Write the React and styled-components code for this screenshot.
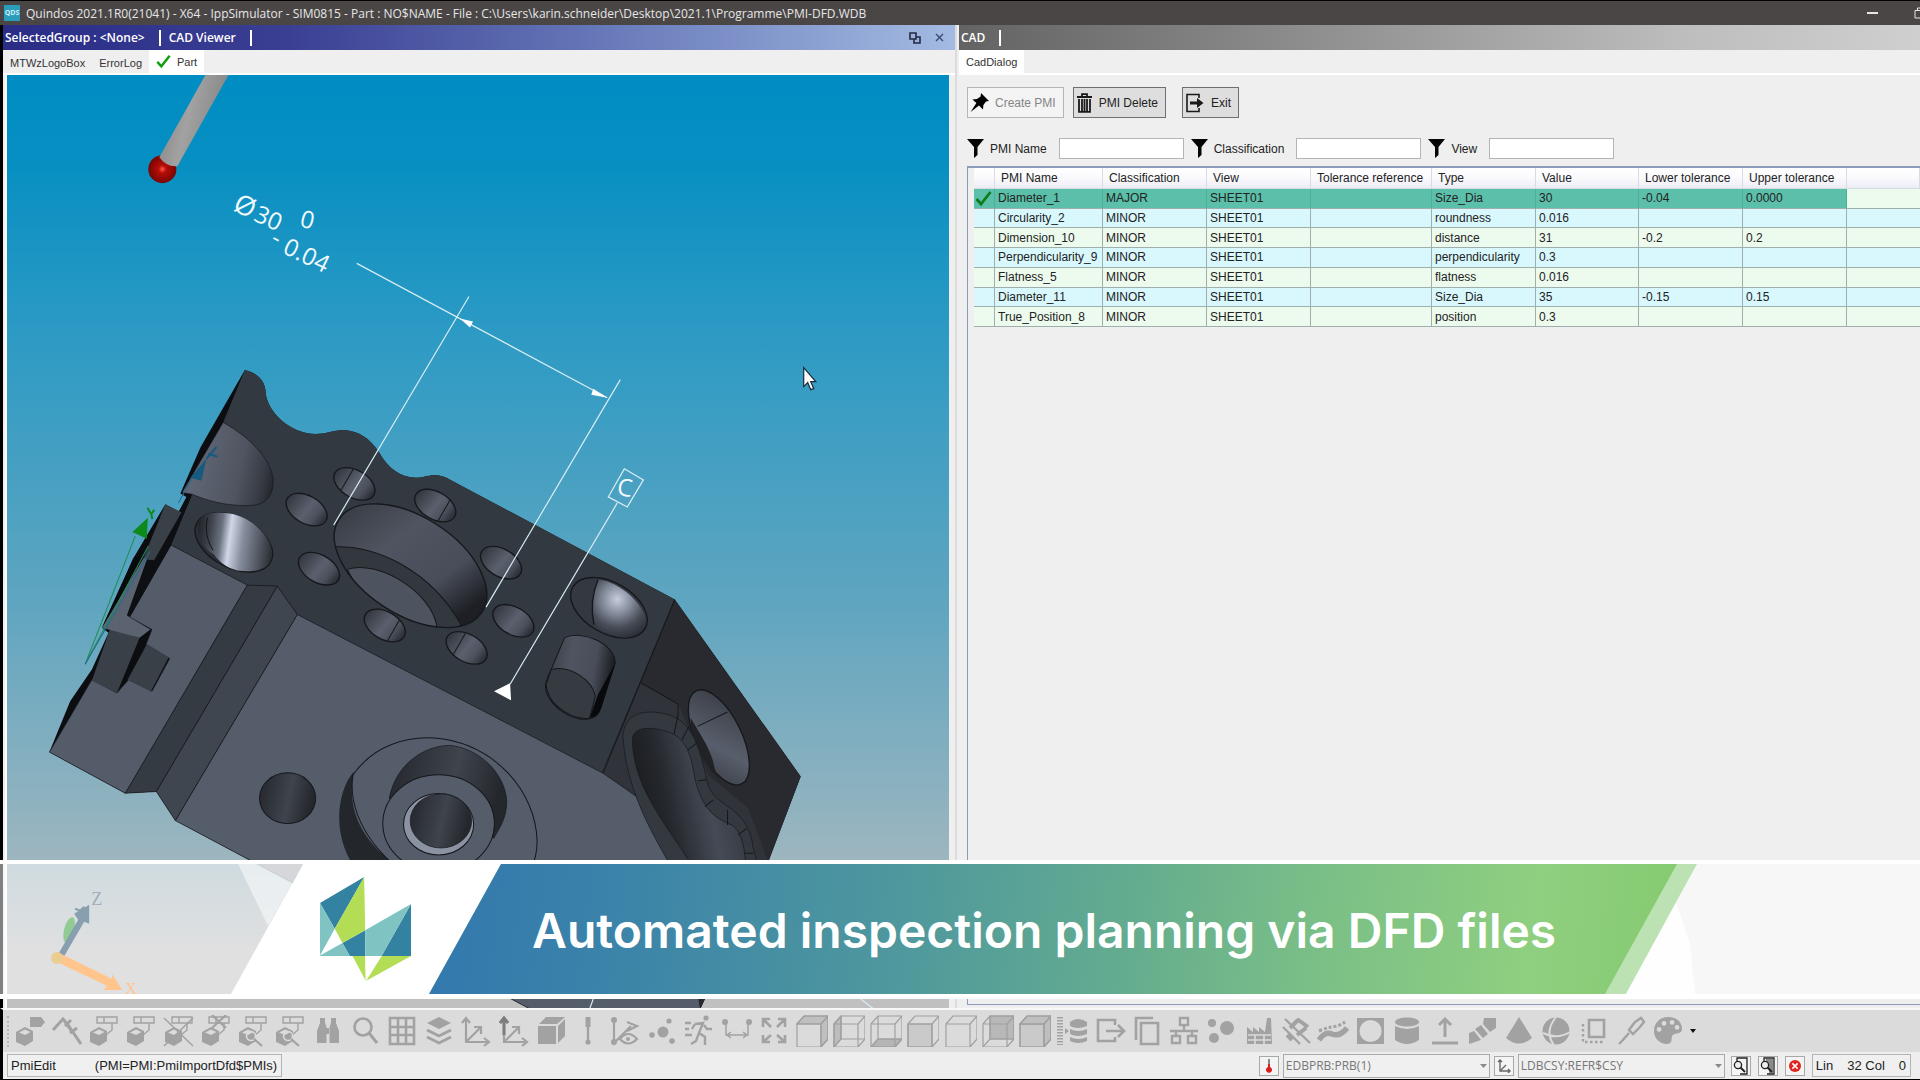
import React from "react";
import styled, { createGlobalStyle } from "styled-components";

const UI = `"Open Sans", "Noto Sans", sans-serif`;
const SANS = `"Liberation Sans", Arial, sans-serif`;

const GlobalStyle = createGlobalStyle`
  *, *::before, *::after { box-sizing: border-box; }
  body { margin: 0; background: #000; font-family: ${SANS}; font-size: 12px; color: #222; }
  button, input, select { font: inherit; color: inherit; }
`;

/* ---------- window frame ---------- */

const Shell = styled.div`
  min-height: 100vh;
  display: flex;
  flex-direction: column;
  border-top: 1px solid #000;
  border-bottom: 1px solid #000;
  overflow: hidden;
`;

const TitleBar = styled.header`
  height: 24px;
  display: flex;
  align-items: center;
  gap: 6px;
  padding-left: 4px;
  background: #4a4646;
  color: #e6e6e6;
  font-family: ${UI};
  white-space: nowrap;
  overflow: hidden;
`;

const AppBadge = styled.span`
  width: 16px;
  height: 16px;
  background: #2b9dbb;
  color: #cdeef7;
  font-size: 7px;
  font-weight: 700;
  line-height: 16px;
  text-align: center;
`;

const TitleText = styled.h1`
  margin: 0;
  flex: 1;
  font-size: 12px;
  font-weight: 400;
`;

const WindowButtons = styled.div`
  display: flex;
  margin-right: -24px;
`;

const WindowButton = styled.button`
  width: 48px;
  height: 24px;
  padding: 0;
  border: 0;
  background: none;
  color: #e6e6e6;
  display: grid;
  place-items: center;
`;

const Workspace = styled.main`
  flex: 1;
  display: flex;
`;

const Pane = styled.section`
  display: flex;
  flex-direction: column;
  min-width: 0;
  background: #efefef;
  ${(p) =>
    p.$side === "left"
      ? "width: calc(50% - 3px); border-left: 3px solid #000; border-right: 2px solid #dcdcdc;"
      : "flex: 1; padding-left: 2px;"}
`;

const PaneHeader = styled.div`
  height: 25px;
  display: flex;
  align-items: center;
  padding: 0 10px 0 2px;
  color: #fff;
  font-family: ${UI};
  background: ${(p) =>
    p.$active
      ? "linear-gradient(90deg, #2a2c86 0%, #3a3f93 30%, #6273b5 60%, #a3bbe2 100%)"
      : "linear-gradient(90deg, #636363 0%, #8c8c8c 35%, #bdbdbd 75%, #cfcfcf 100%)"};
`;

const HeaderTitle = styled.h2`
  margin: 0;
  padding-right: 14px;
  margin-right: 8px;
  border-right: 2px solid #fff;
  font-size: 12px;
  font-weight: 600;
  line-height: 16px;
  white-space: nowrap;
`;

const HeaderActions = styled.div`
  margin-left: auto;
  display: flex;
  gap: 12px;
`;

const MiniButton = styled.button`
  width: 12px;
  height: 14px;
  padding: 0;
  border: 0;
  background: none;
  display: grid;
  place-items: center;
`;

const Tabs = styled.nav`
  height: 25px;
  display: flex;
  align-items: flex-start;
  border-bottom: 2px solid #fff;
  font-size: 11px;
`;

const Tab = styled.button`
  height: ${(p) => (p.$active ? 23 : 21)}px;
  margin-top: ${(p) => (p.$active ? 0 : 2)}px;
  padding: 0 7px;
  display: flex;
  align-items: center;
  gap: 6px;
  border: 0;
  background: ${(p) => (p.$active ? "#fff" : "transparent")};
  color: #333;
  white-space: nowrap;
`;

/* ---------- CAD viewport ---------- */

const Viewport = styled.div`
  flex: 1;
  margin: 0 6px 0 2px;
  border-left: 2px solid #fff;
  display: flex;
  background: linear-gradient(180deg, #008dc3 0%, #068fc2 9%, #2f9bc4 29%, #5ea5c0 56%, #9ab5bf 83%, #c0c0c1 94%, #c0c0c1 100%);
`;

const Scene = styled.svg`
  flex: 1;
  width: 100%;
  min-width: 0;
  min-height: 600px;
  display: block;
`;

/* ---------- PMI dialog ---------- */

const Dialog = styled.div`
  flex: 1;
  display: flex;
  flex-direction: column;
  padding: 12px 0 3px 8px;
`;

const ActionRow = styled.div`
  display: flex;
  gap: 9px;
`;

const ActionButton = styled.button`
  height: 31px;
  display: flex;
  align-items: center;
  gap: 6px;
  padding: 0 7px 0 2px;
  margin-right: ${(p) => p.$after || 0}px;
  border: 1px solid #6f6f6f;
  background: #dedede;
  color: #222;
  white-space: nowrap;
  &:disabled {
    border-color: #b5b5b5;
    background: #f4f4f4;
    color: #858585;
  }
`;

const FilterRow = styled.div`
  display: flex;
  align-items: center;
  gap: 7px;
  margin: 20px 0 7px;
`;

const FilterField = styled.div`
  display: flex;
  align-items: center;
  gap: 6px;
`;

const FilterInput = styled.input`
  width: 125px;
  height: 21px;
  margin-left: 6px;
  border: 1px solid #b4b4b4;
  background: #fff;
`;

const GridFrame = styled.div`
  flex: 1;
  padding-left: 6px;
  border: 1px solid #8b9cb8;
  border-top: 2px solid #8b9cb8;
  border-right: 0;
  overflow: hidden;
`;

const PmiTable = styled.table`
  width: 100%;
  height: 159px;
  table-layout: fixed;
  border-collapse: separate;
  border-spacing: 0;
  font-size: 12px;
`;

const Col = styled.col`
  width: ${(p) => (p.$w ? `${p.$w}px` : "auto")};
`;

const Th = styled.th`
  height: 21px;
  padding: 0 0 0 6px;
  text-align: left;
  font-weight: 400;
  white-space: nowrap;
  border-right: 1px solid #d9dbe4;
  border-bottom: 1px solid #d5dbe0;
  background: linear-gradient(180deg, #fff 0%, #fafafd 50%, #ececf4 100%);
`;

const Td = styled.td`
  padding: 0 0 0 3px;
  line-height: 18px;
  white-space: nowrap;
  overflow: hidden;
  border-right: 1px solid #9fb0ac;
  border-bottom: 1px solid #9fb0ac;
`;

const Tr = styled.tr`
  background: ${(p) => (p.$tint ? "#d9f8fd" : "#edfbee")};
  ${(p) => p.$selected && `& > td:not(:last-child) { background: #5bbfa9; border-right-color: #4fae9a; }`}
  & > td:first-child { padding-left: 1px; }
  & > td:last-child { border-right: 0; }
  svg { display: block; }
`;

/* ---------- toolbar & status ---------- */

const ToolStrip = styled.div`
  height: 44px;
  display: flex;
  align-items: center;
  padding-left: 4px;
  border-left: 3px solid #000;
  border-top: 2px solid #f8f8f8;
  background: #dbdbdb;
`;

const Grip = styled.span`
  width: 4px;
  height: 31px;
  border-left: 2px dotted #b4b4b4;
`;

const ToolGrid = styled.div`
  width: 87.6%;
  flex: 0 0 auto;
  display: grid;
  grid-template-columns: repeat(45, 1fr);
`;

const ToolButton = styled.button`
  height: 36px;
  padding: 0;
  border: 0;
  background: none;
  color: #a2a2a2;
  display: grid;
  place-items: center;
`;

const MoreButton = styled(ToolButton)`
  width: 12px;
  color: #111;
`;

const StatusBar = styled.footer`
  height: 27px;
  display: flex;
  align-items: center;
  padding: 0 0 0 4px;
  border-left: 3px solid #000;
  background: #eee;
  overflow: hidden;
`;

const StatusBox = styled.div`
  height: 23px;
  display: flex;
  align-items: center;
  gap: ${(p) => p.$gap || 39}px;
  padding: 0 4px 0 3px;
  border: 1px solid #b4b4b4;
  background: #f0f0f0;
  font-size: 13px;
  white-space: nowrap;
  color: #222;
`;

const StatusRight = styled.div`
  margin-left: auto;
  display: flex;
  align-items: center;
  gap: 4px;
  padding-right: 9px;
`;

const StatusButton = styled.button`
  width: 20px;
  height: 20px;
  padding: 0;
  margin-right: ${(p) => p.$after || 0}px;
  border: 1px solid #a8a8a8;
  background: #f4f4f4;
  display: grid;
  place-items: center;
`;

const SelectWrap = styled.div`
  position: relative;
  display: flex;
  margin-right: ${(p) => p.$after || 0}px;
  svg { position: absolute; right: 3px; top: 10px; pointer-events: none; }
`;

const StatusSelect = styled.select`
  appearance: none;
  width: 207px;
  height: 24px;
  padding: 0 16px 0 2px;
  border: 1px solid #aaa;
  border-radius: 0;
  background: #f0f0f0;
  color: #777;
  font-family: ${UI};
  font-size: 12px;
`;

/* ---------- lower third ---------- */

const Banner = styled.aside`
  position: fixed;
  left: 0;
  right: 0;
  bottom: 81px;
  display: flex;
  height: 139px;
  border-top: 4px solid #fff;
  border-bottom: 5px solid #fff;
  background: rgba(255, 255, 255, 0.5);
`;

const Glass = styled.div`
  width: 303px;
  margin-right: -72px;
  background: rgba(255, 255, 255, 0.5);
  clip-path: polygon(238px 0, 303px 0, 268px 62px);
`;

const LogoPlate = styled.div`
  width: 270px;
  display: flex;
  align-items: center;
  padding-left: 89px;
  background: #fff;
  clip-path: polygon(72px 0, 100% 0, 100% 100%, 0 100%);
`;

const Ribbon = styled.div`
  flex: 1;
  margin-left: -72px;
  padding-right: 20px;
  display: flex;
  background: #bce2b3;
  clip-path: polygon(72px 0, 100% 0, calc(100% - 71px) 100%, 0 100%);
`;

const RibbonFill = styled.div`
  flex: 1;
  display: flex;
  align-items: center;
  padding: 4px 0 0 103px;
  background: linear-gradient(97deg, #3278ae 0%, #3b83a9 15%, #4f989d 38%, #64ac8f 56%, #79be87 70%, #8fcf80 88%, #85ca6f 100%);
  clip-path: polygon(0 0, 100% 0, calc(100% - 72px) 100%, 0 100%);
`;

const BannerTitle = styled.p`
  margin: 0;
  color: #fff;
  font-family: Inter, "Open Sans", sans-serif;
  font-size: 48px;
  font-weight: 600;
  line-height: 56px;
  white-space: nowrap;
`;

const RightGlow = styled.div`
  width: 294px;
  margin-left: -71px;
  background: rgba(255, 255, 255, 0.8);
  clip-path: polygon(71px 0, 0 100%, 69px 100%, 64px 80px, 50px 38px);
`;

/* ---------- small drawings ---------- */

const Tick = ({ size = 17, color = "#12a012" }) => (
  <svg width={size} height={size} viewBox="0 0 17 17" fill="none" stroke={color} strokeWidth="2.8">
    <path d="M1.5 9 L6 14 L15.5 2" />
  </svg>
);

const Pin = () => (
  <svg width="19" height="19" viewBox="0 0 19 19">
    <path d="M11 0 L19 8 L16 8.6 L13.4 12 L13 16.4 L9 12.6 L0.6 19 L6.4 10 L2.4 6.4 L7 6 L10.6 3.6Z" fill="#000" />
  </svg>
);

const Trash = () => (
  <svg width="17" height="20" viewBox="0 0 17 20" fill="none" stroke="#1a1a1a" strokeWidth="1.8">
    <path d="M1 4H16M6 3.5V1.2H11V3.5M3 6V18.8H14V6M6 6V18M8.5 6V18M11 6V18" />
  </svg>
);

const ExitIcon = () => (
  <svg width="20" height="20" viewBox="0 0 20 20" fill="none" stroke="#1a1a1a">
    <path d="M14 5V1.5H2V18.5H14V15" strokeWidth="1.6" />
    <path d="M5 10H16" strokeWidth="3" />
    <path d="M12 5L18.5 10L12 15Z" fill="#1a1a1a" stroke="none" />
  </svg>
);

const Funnel = () => (
  <svg width="17" height="19" viewBox="0 0 17 19">
    <path d="M0 0H17L10.5 8V16L7 19V8Z" fill="#050505" />
  </svg>
);

const Logo = () => (
  <svg width="91" height="104" viewBox="960 66 272 311" role="img" aria-label="Company logo">
    <path d="M1092 66L960 144L1004 221Z M1027 263L1095 225V302H1049Z M1232 147V302H1144Z" fill="#3382a2" />
    <path d="M960 144L1004 221L960 301Z M960 301L1027 263L1049 302H960Z M1095 225L1232 147L1144 302H1095Z" fill="#80c3c3" />
    <path d="M1092 66L1095 225L1027 263L1004 221Z M1057 302H1095L1097 377Z M1144 302H1232L1097 377Z" fill="#b2dd55" />
    <path d="M1095 302H1144L1097 377Z" fill="#fff" />
  </svg>
);

/* ---------- toolbar glyphs, 32 x 32 ---------- */

const box = (
  <path d="M2 17L11 12L19 16V26L11 31L2 27Z M5 17.5L11 20L16.5 17L11 14.4Z" fill="currentColor" fillRule="evenodd" stroke="none" />
);
const flag = <path d="M9 2H29V8H9Z M16 2V8 M24 8V15L18 20" strokeWidth="1.4" />;
const axes = <path d="M6 4V27H27 M2 8L6 3L10 8 M24 23L29 27L24 31 M7 26L20 13 M14 12H21V19" />;
const loupe = (
  <>
    <circle cx="14" cy="21" r="4.5" stroke="#dbdbdb" strokeWidth="1.6" />
    <path d="M17 24L25 31" />
  </>
);

const cube = (shade) => (
  <g strokeWidth="1.2" stroke="#a0a0a0">
    {shade.includes("f") && <path d="M1 9H25V32H1Z" fill="#cacaca" />}
    {shade.includes("t") && <path d="M1 9L8 1H32L25 9Z" fill="#bfbfbf" />}
    {shade.includes("r") && <path d="M25 9L32 1V24L25 32Z" fill="#bfbfbf" />}
    {shade.includes("l") && <path d="M1 9L8 1V24L1 32Z" fill="#bdbdbd" />}
    {shade.includes("b") && <path d="M1 32L8 24H32L25 32Z" fill="#b5b5b5" />}
    {shade.includes("k") && <path d="M8 1H32V24H8Z" fill="#b8b8b8" />}
    <path d="M1 9H25V32H1Z M1 9L8 1H32V24L25 32 M25 9L32 1" />
    {shade.includes("w") && <path d="M8 1V24H32 M1 32L8 24" />}
  </g>
);

const TOOLS = [
  ["Create element", <>{box}<path d="M16 2H27L31 7L27 12H16Z" fill="currentColor" stroke="none" /></>],
  ["Measure", <path d="M2 15L12 4L17 10L30 29 M12 4L22 18 M20 5L14 11 M26 13L19 18" strokeWidth="3" />],
  ["Show PMI", <>{box}{flag}</>],
  ["Add PMI", <>{box}{flag}</>],
  ["Hide PMI", <>{box}{flag}<path d="M1 3L30 31 M30 3L1 31" strokeWidth="1.5" /></>],
  ["Delete PMI", <>{box}{flag}<path d="M12 0L26 13 M26 0L12 13" /></>],
  ["Find PMI", <>{box}{flag}{loupe}</>],
  ["Inspect PMI", <>{box}{flag}{loupe}</>],
  ["Search", <path d="M8 3H13V8L14.5 12V28H5V16L8 8Z M24 3H19V8L17.5 12V28H27V16L24 8Z M14 13H18V19H14Z" fill="currentColor" stroke="none" />],
  ["Zoom", <><circle cx="14" cy="12" r="8.5" strokeWidth="2.6" /><path d="M20 18L28 28" strokeWidth="3" /></>],
  ["Grid", <path d="M4 3H28V29H4Z M12 3V29 M20 3V29 M4 12H28 M4 20H28" strokeWidth="2.6" />],
  ["Layers", <><path d="M16 2L28 8L16 14L4 8Z" fill="currentColor" stroke="none" /><path d="M4 15L16 21L28 15 M4 22L16 28L28 22" strokeWidth="2.8" /></>],
  ["Coordinate system", axes],
  ["Edit coordinate system", <>{axes}<path d="M6 5V20 M2 8L6 3L10 8" stroke="#7d7d7d" strokeWidth="3" /></>],
  ["Solid", <path d="M3 11H21V29H3Z M4 9L11 2H30L22 9Z M23 11L30 4V21L23 28Z" fill="currentColor" stroke="none" />],
  ["Probe", <><path d="M16 2V29" strokeWidth="2.4" /><path d="M16 2V12" strokeWidth="5" /><circle cx="16" cy="27" r="2.6" fill="currentColor" stroke="none" /></>],
  ["Show path", <><path d="M5 4V28L22 11 M18 7L28 11L18 16" /><circle cx="5" cy="5" r="3" fill="currentColor" stroke="none" /><circle cx="5" cy="27" r="3" fill="currentColor" stroke="none" /><path d="M11 24Q19 14 28 24Q19 33 11 24Z" /><circle cx="19" cy="24" r="2" fill="currentColor" stroke="none" /></>],
  ["Points", <g fill="currentColor" stroke="none"><circle cx="16" cy="17" r="5.5" /><circle cx="22" cy="6" r="2.6" /><circle cx="5" cy="20" r="2.8" /><circle cx="25" cy="26" r="2.8" /></g>],
  ["Run", <><circle cx="22" cy="3" r="2.6" fill="currentColor" stroke="none" /><path d="M11 9L19 8L15 18L21 22V30 M15 18L12 26L7 29 M20 10L23 14H28 M11 9L8 14 M1 8H7 M1 14H5 M1 20H8" strokeWidth="2.4" /></>],
  ["Distance", <><path d="M5 7V20H27V7 M10 17L6 20L10 23 M22 17L26 20L22 23" strokeWidth="1.5" /><circle cx="4" cy="7" r="3" fill="currentColor" stroke="none" /><circle cx="28" cy="7" r="3" fill="currentColor" stroke="none" /></>],
  ["Fit view", <path d="M5 12V4H12 M5 4L13 12 M20 4H27V12 M27 4L19 12 M5 20V27H12 M5 27L13 20 M27 20V27H20 M27 27L19 20" strokeWidth="2.6" />],
  ["Front top view", cube("tr")],
  ["Left view", cube("lw")],
  ["Bottom view", cube("bw")],
  ["Front view", cube("f")],
  ["Right view", cube("")],
  ["Back view", cube("kw")],
  ["Isometric view", cube("ftr")],
  ["Store", <><path d="M4 2V30" strokeWidth="6" strokeDasharray="1.5 1.5" /><g fill="currentColor" stroke="none"><path d="M14 7Q22 1 31 7V11Q22 15 14 11Z M14 14Q22 18 31 14V19Q22 23 14 19Z M14 22Q22 26 31 22V26Q22 30 14 26Z M9 13L13 16L9 19Z" /></g></>],
  ["Export", <path d="M21 10V5H4V26H21V22 M12 16H29 M24 10L30 16L24 22" strokeWidth="2.6" />],
  ["Copy", <path d="M10 8H27V29H10Z M5 25V3H22" strokeWidth="2.6" />],
  ["Structure", <path d="M12 3H20V10H12Z M4 21H12V28H4Z M20 21H28V28H20Z M16 10V16 M2 16H30 M8 16V21 M24 16V21" strokeWidth="2.4" />],
  ["Cluster", <g fill="currentColor" stroke="none"><circle cx="22" cy="13" r="7" /><circle cx="7" cy="8" r="4" /><circle cx="9" cy="23" r="5" /></g>],
  ["Factory", <><path d="M4 29V12L10 17V12L16 17V12L22 17L24 3H28L29 29Z" fill="currentColor" stroke="none" /><path d="M5 20H28 M5 25H28 M12 20V29 M21 20V29" stroke="#dbdbdb" strokeWidth="1.6" /></>],
  ["Caliper", <><path d="M5 4L30 28 M3 12L20 29" strokeWidth="2.4" /><path d="M17 4L28 12 M10 13L18 5 M17 20L26 13 M7 20L12 25" strokeWidth="4" /></>],
  ["Surface points", <><path d="M2 25Q8 16 15 19Q23 22 30 13" strokeWidth="5.5" /><path d="M2 16Q9 13 15 12Q23 11 28 7" strokeDasharray="3 2" strokeWidth="3" /></>],
  ["Hole", <path d="M3 3H30V29H3Z M16.5 5A11 11 0 1 0 16.6 5Z" fill="currentColor" fillRule="evenodd" stroke="none" />],
  ["Cylinder", <g fill="currentColor" stroke="none"><ellipse cx="16" cy="7" rx="12" ry="4.5" /><path d="M4 11Q16 17 28 11V25Q16 33 4 25Z" /></g>],
  ["Align up", <path d="M16 4V22 M10 10L16 4L22 10 M3 28H29" strokeWidth="3" />],
  ["Link", <path d="M18 3H30V13L24 17L17 9Z M15 10L22 19L17 23L9 14Z M8 16L15 25L3 29V18Z" fill="currentColor" stroke="none" />],
  ["Cone", <path d="M16 2L29 23Q16 34 3 23Z" fill="currentColor" stroke="none" />],
  ["Sphere", <><circle cx="16" cy="16" r="13.5" fill="currentColor" stroke="none" /><path d="M16 2Q4 17 14 30 M3 18Q17 25 30 17" stroke="#dbdbdb" strokeWidth="2" /></>],
  ["Region", <><path d="M11 5H26V22H11Z" strokeWidth="2.6" /><path d="M5 9V27H26" strokeDasharray="2.5 2.5" strokeWidth="2.4" /></>],
  ["Screwdriver", <path d="M20 7L26 3L29 7L24 13L18 19L14 15Z M14 18L7 26 M4 29L9 24" strokeWidth="2.4" />],
  ["Colours", <path d="M16 2C25 2 30 7 30 14C30 20 23 17 20 21C19 25 21 29 14 29C6 28 2 22 2 16C2 8 8 2 16 2Z M7 12A2.4 2.4 0 1 0 7.1 12Z M12 6A2.4 2.4 0 1 0 12.1 6Z M20 5A2.4 2.4 0 1 0 20.1 5Z M25 10A2.4 2.4 0 1 0 25.1 10Z" fill="currentColor" fillRule="evenodd" stroke="none" />],
];

const Glyph = ({ children }) => (
  <svg width="32" height="32" viewBox="0 0 32 32" fill="none" stroke="currentColor" strokeWidth="2.2">
    {children}
  </svg>
);

/* ---------- machined part ---------- */

const HOLES = [
  [1061, 429, 1], [1303, 494, 2], [918, 506, 0], [955, 683, 0],
  [1152, 853, 2], [1397, 920, 1], [1500, 665, 0], [1537, 839, 0],
];

function CadScene() {
  return (
    <Scene viewBox="7 75 942 931" preserveAspectRatio="xMinYMin slice" role="img" aria-label="Part with dimensions">
      <defs>
        <linearGradient id="hole" x1="0" y1="0" x2="1" y2="0.1">
          <stop offset="0" stopColor="#2f333a" />
          <stop offset="0.55" stopColor="#5a606d" />
          <stop offset="0.8" stopColor="#4b505c" />
          <stop offset="1" stopColor="#2d3138" />
        </linearGradient>
        <linearGradient id="bore" x1="0" y1="0" x2="1" y2="0.2">
          <stop offset="0" stopColor="#343940" />
          <stop offset="0.4" stopColor="#4f5460" />
          <stop offset="0.75" stopColor="#484d59" />
          <stop offset="1" stopColor="#1d1f24" />
        </linearGradient>
        <linearGradient id="cone" gradientUnits="userSpaceOnUse" x1="590" y1="600" x2="815" y2="630">
          <stop offset="0" stopColor="#24272c" />
          <stop offset="0.15" stopColor="#3d424b" />
          <stop offset="0.3" stopColor="#6b7280" />
          <stop offset="0.42" stopColor="#cfd7e8" />
          <stop offset="0.6" stopColor="#858d9d" />
          <stop offset="1" stopColor="#2a2d33" />
        </linearGradient>
        <radialGradient id="ball" gradientUnits="userSpaceOnUse" cx="1848" cy="775" r="120">
          <stop offset="0" stopColor="#c6cedd" />
          <stop offset="0.3" stopColor="#8f97a7" />
          <stop offset="0.7" stopColor="#474c57" />
          <stop offset="1" stopColor="#2b2e35" />
        </radialGradient>
        <linearGradient id="bowl" gradientUnits="userSpaceOnUse" x1="590" y1="380" x2="818" y2="430">
          <stop offset="0" stopColor="#5f6573" />
          <stop offset="0.55" stopColor="#4f5460" />
          <stop offset="0.85" stopColor="#373b44" />
          <stop offset="1" stopColor="#24272c" />
        </linearGradient>
        <linearGradient id="kidney" x1="0" y1="0.6" x2="1" y2="0.3">
          <stop offset="0" stopColor="#17181b" />
          <stop offset="0.3" stopColor="#24272c" />
          <stop offset="0.65" stopColor="#454b56" />
          <stop offset="1" stopColor="#2f333a" />
        </linearGradient>
        <linearGradient id="slot" gradientUnits="userSpaceOnUse" x1="2070" y1="1080" x2="2230" y2="1300">
          <stop offset="0" stopColor="#383c44" />
          <stop offset="0.6" stopColor="#585e6b" />
          <stop offset="1" stopColor="#3a3e47" />
        </linearGradient>
        <linearGradient id="well" x1="0" y1="0" x2="1" y2="0.2">
          <stop offset="0" stopColor="#22252a" />
          <stop offset="0.6" stopColor="#3f444d" />
          <stop offset="1" stopColor="#24272c" />
        </linearGradient>
        <linearGradient id="rod" x1="0" y1="0" x2="1" y2="0.3">
          <stop offset="0" stopColor="#7e7e7e" />
          <stop offset="0.5" stopColor="#a2a2a2" />
          <stop offset="1" stopColor="#858585" />
        </linearGradient>
        <radialGradient id="tip" cx="0.5" cy="0.5" r="0.55">
          <stop offset="0" stopColor="#ff5a4a" />
          <stop offset="0.25" stopColor="#b80d08" />
          <stop offset="1" stopColor="#6d0502" />
        </radialGradient>
        <clipPath id="boreClip">
          <ellipse cx="1229" cy="674" rx="255" ry="146" transform="rotate(33 1229 674)" />
        </clipPath>
      </defs>

      <circle cx="162" cy="169" r="14" fill="url(#tip)" />
      <path d="M205 75H228L177 166Q166 167 159 157Z" fill="url(#rod)" />

      <g transform="translate(0 340) scale(0.33333)" stroke="#15171b" strokeWidth="0">
        <path
          d="M733 88C775 98 795 125 795 155C800 215 870 280 945 280C985 280 1010 262 1045 270C1090 278 1115 305 1135 335C1165 390 1215 420 1270 408C1300 400 1325 402 1350 418L2020 775L2397 1305L2300 1560L2097 2000H1585L525 1437L468 1350L375 1355L148 1232L210 1080L275 985L325 875L305 860L400 650L495 490L535 512L558 468L540 458L600 320Z"
          fill="#0c0d10"
        />
        <path
          d="M733 88C775 98 795 125 795 155C800 215 870 280 945 280C985 280 1010 262 1045 270C1090 278 1115 305 1135 335C1165 390 1215 420 1270 408C1300 400 1325 402 1350 418L2020 775L1800 1298L890 820L830 735L740 732L512 612L575 460L620 350L668 245Z"
          fill="#333940"
        />
        <path d="M2020 775L2397 1305L2300 1560L2097 2000H1980L2020 1560L1800 1298Z" fill="#282a2f" />
        <path d="M1918 1025L2030 1085L2120 1300L2240 1400L2300 1560L2230 1700H2000L1800 1298Z" fill="#30343a" />
        <path d="M890 820L1805 1295L1920 1375C1985 1430 2010 1500 2020 1560L2097 2000H1585L525 1437Z" fill="#555d6b" strokeWidth="2" />
        <path d="M830 735L890 820L525 1437L468 1350Z" fill="#40464f" strokeWidth="2" />
        <path d="M740 732L830 735L468 1350L375 1355Z" fill="#353b42" strokeWidth="2" />
        <path d="M512 612L740 732L375 1355L148 1232L275 1015L350 1055L385 1015L455 1050L508 952L437 910L455 865L388 828Z" fill="#545c6a" strokeWidth="2" />
        <path d="M330 862L418 890L350 1055L275 1018Z M440 908L505 948L452 1050L382 1015Z" fill="#3a4048" />
        <path d="M495 490L545 515L462 658L430 650Z" fill="#3a4048" />
        <path d="M430 650L462 658L388 828L450 865L418 890L305 860Z" fill="#5b6371" />
        <path d="M440 655L462 658L540 520L575 460L512 612L388 828L380 822Z" fill="#0d0f12" />
        <path d="M430 650L305 860L400 650Z" fill="#090a0c" />
        <path d="M668 245C750 290 818 360 818 425C815 480 780 495 740 494C680 495 620 480 575 460L545 455Z" fill="url(#bowl)" strokeWidth="2" />

        <ellipse cx="700" cy="604" rx="125" ry="76" transform="rotate(28 700 604)" fill="#2b2e35" strokeWidth="4" />
        <path d="M592 560C590 510 650 510 700 520C760 535 815 590 815 640C810 690 760 695 710 688C680 682 655 662 640 640C612 625 595 595 592 560Z" fill="url(#cone)" />
        <path d="M622 530C612 560 620 600 638 628" fill="none" strokeWidth="3" />

        {HOLES.map(([x, y, seam]) => (
          <g key={`${x}-${y}`} transform={`rotate(30 ${x} ${y})`}>
            <ellipse cx={x} cy={y} rx="67" ry="41" fill="url(#hole)" strokeWidth="4" />
            {seam === 1 && <path d={`M${x - 25} ${y - 36}V${y + 36}`} strokeWidth="3" />}
            {seam === 2 && <path d={`M${x + 30} ${y - 36}V${y + 34}`} strokeWidth="3" />}
          </g>
        ))}

        <ellipse cx="1229" cy="674" rx="255" ry="146" transform="rotate(33 1229 674)" fill="url(#bore)" />
        <g clipPath="url(#boreClip)">
          <path d="M990 618C1130 610 1290 690 1380 850L1350 880C1240 870 1210 830 1130 780C1050 725 1000 690 990 618Z" fill="#33383e" strokeWidth="3" />
          <path d="M1040 685C1130 655 1290 750 1308 855C1250 860 1180 835 1130 800C1090 770 1060 730 1040 685Z" fill="#4d535f" strokeWidth="3" />
        </g>
        <ellipse cx="1229" cy="674" rx="255" ry="146" transform="rotate(33 1229 674)" fill="none" strokeWidth="4" />

        <ellipse cx="1823" cy="800" rx="125" ry="76" transform="rotate(30 1823 800)" fill="#343841" />
        <path d="M1790 716C1850 718 1935 790 1936 850C1930 890 1880 892 1840 884C1815 878 1795 866 1778 850C1770 810 1772 760 1790 716Z" fill="url(#ball)" />
        <path d="M1790 716C1772 760 1770 810 1778 850" fill="none" strokeWidth="4" />
        <ellipse cx="1823" cy="800" rx="125" ry="76" transform="rotate(30 1823 800)" fill="none" strokeWidth="4" />

        <path d="M1690 890C1740 865 1840 905 1842 965L1795 1110C1780 1140 1740 1140 1700 1120C1650 1095 1625 1050 1635 1020Z" fill="url(#bore)" strokeWidth="3" />
        <path d="M1842 965L1800 1100C1792 1120 1780 1130 1765 1130L1790 1060Z" fill="#08090b" />
        <path d="M1650 985C1710 970 1775 1020 1782 1065L1765 1130C1730 1140 1640 1100 1635 1030Z" fill="#353b41" strokeWidth="3" />

        <ellipse cx="2152" cy="1188" rx="155" ry="68" transform="rotate(64 2152 1188)" fill="url(#slot)" strokeWidth="4" />
        <path d="M2068 1130C2090 1170 2120 1210 2135 1260C2140 1290 2150 1310 2165 1322C2120 1290 2060 1190 2068 1130Z" fill="#202226" />
        <path d="M2088 1155L2178 1112" strokeWidth="3" />

        <path d="M1865 1190C1865 1115 1930 1100 2000 1120C2090 1145 2100 1260 2120 1330C2140 1400 2240 1390 2255 1520L2300 1700H2080C2010 1560 1880 1400 1865 1190Z" fill="#343940" strokeWidth="2" />
        <path d="M1893 1200C1890 1150 1960 1155 2010 1175C2060 1200 2070 1250 2080 1310C2100 1400 2140 1430 2190 1450C2230 1470 2235 1560 2235 1640H2110C2030 1480 1900 1370 1893 1200Z" fill="url(#kidney)" strokeWidth="2" />
        <path d="M2018 1178L2030 1120 M2042 1195L2062 1155 M2060 1225L2085 1205 M2090 1318L2115 1315 M2110 1395L2135 1375 M2178 1450V1405 M2210 1480L2235 1460 M2228 1535H2255 M1920 1025L2030 1088V1120 M2020 775L1805 1295" fill="none" strokeWidth="3" />

        <ellipse cx="861" cy="1370" rx="84" ry="76" fill="url(#well)" strokeWidth="3" />
        <path d="M1060 1290C1005 1350 990 1500 1080 1600L1200 1700L1330 1640C1100 1560 1030 1420 1060 1290Z" fill="#23262b" />
        <path d="M1057 1300C1120 1210 1220 1185 1300 1190C1480 1205 1605 1350 1608 1500C1605 1620 1520 1680 1400 1680C1200 1640 1030 1460 1057 1300Z" fill="#555d6b" strokeWidth="3" />
        <path d="M1165 1370C1190 1250 1290 1210 1350 1212C1450 1225 1515 1310 1517 1380C1517 1430 1495 1460 1478 1490Z" fill="url(#well)" strokeWidth="2" />
        <ellipse cx="1313" cy="1446" rx="167" ry="146" fill="#555d6b" strokeWidth="3" />
        <ellipse cx="1313" cy="1448" rx="105" ry="92" fill="#8b92a2" strokeWidth="3" />
        <ellipse cx="1320" cy="1438" rx="92" ry="81" fill="url(#well)" strokeWidth="2" />
      </g>

      <path d="M85 663L135 535M85 663L148 545" stroke="#1f8f56" fill="none" />
      <path d="M85 663L150 550M178 502L193 475" stroke="#246a94" fill="none" />
      <path d="M133 531L147 518L146 537Z" fill="#0d8a1c" stroke="#0d8a1c" />
      <path d="M147 507L151 513L154 509M151 513L152 518" stroke="#0d8a1c" strokeWidth="2" fill="none" />
      <path d="M190 477L206 458L201 480Z" fill="#155a80" />
      <path d="M206 458L216 446M208 453L217 456" stroke="#155a80" strokeWidth="2" />

      <g stroke="#d8ecf4" strokeWidth="1.2" fill="none">
        <path d="M356 263L606 397M468 296L333 524M619 379L485 606M616 502L509 683M623 468L642 479L626 506L607 496Z" />
        <path d="M592 997L588 1008M859 997L873 1008" />
      </g>
      <path d="M459 318L472 321L469 327Z M606 397L592 388L590 394Z M493 690L509 682L510 699Z" fill="#fff" />
      <g fill="#f2fafd" fontFamily='"Open Sans", sans-serif' fontWeight="400">
        <text transform="translate(231 209) rotate(28)" fontSize="27">Ø</text>
        <text transform="translate(252 220) rotate(24)" fontSize="24">30</text>
        <text transform="translate(298 226) rotate(14)" fontSize="24">0</text>
        <text transform="translate(269 243) rotate(28)" fontSize="24">-</text>
        <text transform="translate(281 252) rotate(26)" fontSize="24">0.04</text>
        <text transform="translate(615 494) rotate(8)" fontSize="24">C</text>
      </g>

      <path d="M802 367V386L806 382L809 389L812 388L809 381H814Z" fill="#fff" stroke="#1a2a33" strokeWidth="1.2" />

      <g>
        <ellipse cx="69" cy="928" rx="5" ry="13" transform="rotate(15 69 928)" fill="#249628" />
        <path d="M57 954L78 918L74 912L89 903V922L84 920L63 956Z" fill="#0f3f5c" />
        <path d="M75 907L80 909L84 905" stroke="#0f3f5c" strokeWidth="2" fill="none" />
        <path d="M59 951L112 977L112 972L122 988L103 988L107 984L57 960Z" fill="#ff8a1a" />
        <circle cx="57" cy="956" r="6" fill="#d69a20" />
        <text x="91" y="903" fontFamily='"Liberation Serif", serif' fontSize="18" fill="#3a5a78">Z</text>
        <text x="125" y="992" fontFamily='"Liberation Serif", serif' fontSize="16" fill="#ff8a1a">X</text>
      </g>
    </Scene>
  );
}

/* ---------- data ---------- */

const COLUMNS = [
  ["", 21], ["PMI Name", 108], ["Classification", 104], ["View", 104], ["Tolerance reference", 121],
  ["Type", 104], ["Value", 103], ["Lower tolerance", 104], ["Upper tolerance", 104], ["", 0],
];

const ROWS = [
  ["Diameter_1", "MAJOR", "SHEET01", "", "Size_Dia", "30", "-0.04", "0.0000"],
  ["Circularity_2", "MINOR", "SHEET01", "", "roundness", "0.016", "", ""],
  ["Dimension_10", "MINOR", "SHEET01", "", "distance", "31", "-0.2", "0.2"],
  ["Perpendicularity_9", "MINOR", "SHEET01", "", "perpendicularity", "0.3", "", ""],
  ["Flatness_5", "MINOR", "SHEET01", "", "flatness", "0.016", "", ""],
  ["Diameter_11", "MINOR", "SHEET01", "", "Size_Dia", "35", "-0.15", "0.15"],
  ["True_Position_8", "MINOR", "SHEET01", "", "position", "0.3", "", ""],
];

const FILTERS = [["PMI Name", "f-name"], ["Classification", "f-class"], ["View", "f-view"]];

const Caret = () => (
  <svg width="7" height="4" viewBox="0 0 7 4"><path d="M0 0H7L3.5 4Z" fill="#8a8a8a" /></svg>
);

const PageLens = ({ striped }) => (
  <svg width="16" height="18" viewBox="0 0 16 18" fill="none" stroke="#222" strokeWidth="1.3">
    <path d="M4 4V1H14V17H7" />
    {striped && <path d="M6 3H13M6 5H13M9 7H13M9 9H13M9 11H13M9 13H13M9 15H13" strokeWidth="1" />}
    <circle cx="5" cy="8" r="3.6" fill="#eee" />
    <path d="M7.5 10.5L12 15" strokeWidth="2" />
  </svg>
);

export default function App() {
  return (
    <>
      <GlobalStyle />
      <Shell>
        <TitleBar>
          <AppBadge>QDS</AppBadge>
          <TitleText>
            Quindos 2021.1R0(21041) - X64 - IppSimulator - SIM0815 - Part : NO$NAME - File : C:\Users\karin.schneider\Desktop\2021.1\Programme\PMI-DFD.WDB
          </TitleText>
          <WindowButtons>
            <WindowButton aria-label="Minimize">
              <svg width="11" height="2"><path d="M0 1H11" stroke="#e6e6e6" strokeWidth="2" /></svg>
            </WindowButton>
            <WindowButton aria-label="Restore">
              <svg width="12" height="12" viewBox="0 0 12 12" fill="none" stroke="#e6e6e6"><path d="M1 3.5H8.5V11H1Z M3.5 3.5V1H11V8.5H8.5" /></svg>
            </WindowButton>
          </WindowButtons>
        </TitleBar>

        <Workspace>
          <Pane $side="left">
            <PaneHeader $active>
              <HeaderTitle>SelectedGroup : &lt;None&gt;</HeaderTitle>
              <HeaderTitle>CAD Viewer</HeaderTitle>
              <HeaderActions>
                <MiniButton aria-label="Float">
                  <svg width="12" height="12" viewBox="0 0 12 12" fill="none" stroke="#222a44" strokeWidth="1.6"><path d="M1 1H7V7H1Z M5 7V11H11V5H7" /></svg>
                </MiniButton>
                <MiniButton aria-label="Close">
                  <svg width="9" height="9" viewBox="0 0 9 9" stroke="#3c4a70" strokeWidth="1.4"><path d="M1 1L8 8M8 1L1 8" /></svg>
                </MiniButton>
              </HeaderActions>
            </PaneHeader>
            <Tabs>
              <Tab>MTWzLogoBox</Tab>
              <Tab>ErrorLog</Tab>
              <Tab $active><Tick size={15} />Part</Tab>
            </Tabs>
            <Viewport><CadScene /></Viewport>
          </Pane>

          <Pane $side="right">
            <PaneHeader><HeaderTitle>CAD</HeaderTitle></PaneHeader>
            <Tabs><Tab $active>CadDialog</Tab></Tabs>
            <Dialog>
              <ActionRow>
                <ActionButton disabled><Pin />Create PMI</ActionButton>
                <ActionButton $after={7}><Trash />PMI Delete</ActionButton>
                <ActionButton><ExitIcon />Exit</ActionButton>
              </ActionRow>
              <FilterRow>
                {FILTERS.map(([label, id]) => (
                  <FilterField key={id}>
                    <Funnel />
                    <label htmlFor={id}>{label}</label>
                    <FilterInput id={id} type="text" />
                  </FilterField>
                ))}
              </FilterRow>
              <GridFrame>
                <PmiTable>
                  <colgroup>{COLUMNS.map(([, w], i) => <Col key={i} $w={w} />)}</colgroup>
                  <thead>
                    <tr>{COLUMNS.map(([name], i) => <Th key={i}>{name}</Th>)}</tr>
                  </thead>
                  <tbody>
                    {ROWS.map((row, r) => (
                      <Tr key={row[0]} $tint={r % 2 === 1} $selected={r === 0}>
                        <Td>{r === 0 && <Tick color="#0b7f1d" />}</Td>
                        {row.map((cell, c) => <Td key={c}>{cell}</Td>)}
                        <Td />
                      </Tr>
                    ))}
                  </tbody>
                </PmiTable>
              </GridFrame>
            </Dialog>
          </Pane>
        </Workspace>

        <ToolStrip>
          <Grip />
          <ToolGrid>
            {TOOLS.map(([name, art]) => (
              <ToolButton key={name} aria-label={name}><Glyph>{art}</Glyph></ToolButton>
            ))}
          </ToolGrid>
          <MoreButton aria-label="More colours">
            <svg width="6" height="4" viewBox="0 0 6 4"><path d="M0 0H6L3 4Z" fill="#111" /></svg>
          </MoreButton>
        </ToolStrip>

        <StatusBar>
          <StatusBox><span>PmiEdit</span><span>(PMI=PMI:PmiImportDfd$PMIs)</span></StatusBox>
          <StatusRight>
            <StatusButton aria-label="Temperature">
              <svg width="8" height="14" viewBox="0 0 8 14"><path d="M3 0H5V6H3Z" fill="#7c8f8a" /><path d="M3 5H5V8A3 3 0 1 1 3 8Z" fill="#d8201c" /></svg>
            </StatusButton>
            <SelectWrap>
              <StatusSelect aria-label="Probe"><option>EDBPRB:PRB(1)</option></StatusSelect>
              <Caret />
            </SelectWrap>
            <StatusButton aria-label="Coordinate system">
              <svg width="14" height="14" viewBox="0 0 14 14" fill="none" stroke="#666" strokeWidth="1.4"><path d="M3 1V12H13M4 11L9 6M1 3L3 1L5 3M11 10L13 12L11 14" /></svg>
            </StatusButton>
            <SelectWrap $after={2}>
              <StatusSelect aria-label="Reference"><option>LDBCSY:REFR$CSY</option></StatusSelect>
              <Caret />
            </SelectWrap>
            <StatusButton $after={3} aria-label="View page"><PageLens /></StatusButton>
            <StatusButton $after={3} aria-label="View list"><PageLens striped /></StatusButton>
            <StatusButton $after={3} aria-label="Stop">
              <svg width="12" height="12" viewBox="0 0 12 12"><circle cx="6" cy="6" r="6" fill="#e0251f" /><path d="M3.4 3.4L8.6 8.6M8.6 3.4L3.4 8.6" stroke="#fff" strokeWidth="1.5" /></svg>
            </StatusButton>
            <StatusBox $gap={14}><span>Lin</span><span>32 Col</span><span>0</span></StatusBox>
          </StatusRight>
        </StatusBar>
      </Shell>

      <Banner>
        <Glass />
        <LogoPlate><Logo /></LogoPlate>
        <Ribbon>
          <RibbonFill><BannerTitle>Automated inspection planning via DFD files</BannerTitle></RibbonFill>
        </Ribbon>
        <RightGlow />
      </Banner>
    </>
  );
}
